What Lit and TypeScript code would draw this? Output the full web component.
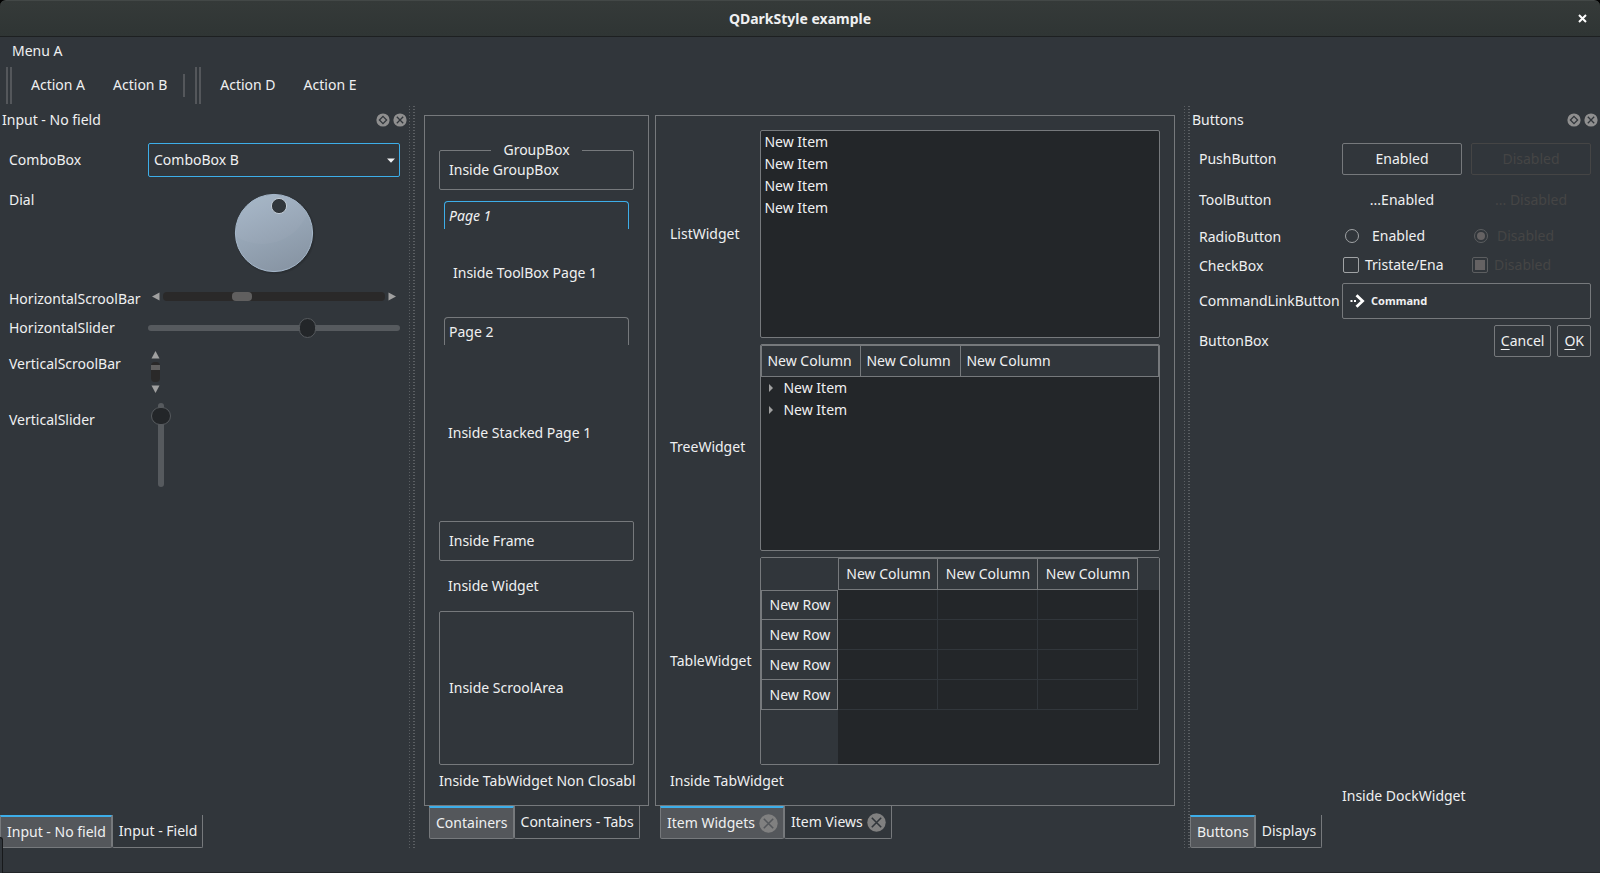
import { LitElement, html, css, svg, nothing } from "lit";
import { customElement, property } from "lit/decorators.js";
import { classMap } from "lit/directives/class-map.js";

const base = css`
  * { box-sizing: border-box; }
  button, select, input { font: inherit; color: inherit; margin: 0; }
  button { background: none; border: 0; padding: 0; text-align: center; white-space: nowrap; }
  svg { display: block; flex: none; }
`;

interface Tab { label: string; closable?: boolean; }

const crossGlyph = svg`<path d="M3.8 3.8l6.4 6.4M10.2 3.8l-6.4 6.4" stroke="#31363b" stroke-width="1.3"/>`;
const diamondGlyph = svg`<path d="M7 3.4L10.6 7L7 10.6L3.4 7z" fill="none" stroke="#31363b" stroke-width="1.3"/>`;

@customElement("tab-strip")
class TabStrip extends LitElement {
  @property({ attribute: false }) tabs: Tab[] = [];
  @property({ type: Number }) selected = 0;

  static styles = [base, css`
    :host { display: block; }
    .strip { display: flex; height: 33px; }
    .tab {
      display: flex; align-items: center; gap: 4px; padding: 0 5px 0 6px;
      border: 1px solid #76797c; border-top: 0 solid #3daee9; border-radius: 0 0 2px 2px;
      line-height: 20px; white-space: nowrap;
    }
    .selected { background: #54575b; border-top-width: 2px; }
    .selected .cross { stroke: #54575b; }
    .cross { stroke: #31363b; }
  `];

  render() {
    return html`<div class="strip" role="tablist">${this.tabs.map((t, i) => html`
      <button class=${classMap({ tab: true, selected: i === this.selected })} role="tab"
        aria-selected=${i === this.selected} @click=${() => (this.selected = i)}>
        ${t.label}${t.closable ? html`
          <svg width="19" height="19" viewBox="0 0 19 19">
            <circle cx="9.5" cy="9.5" r="9.2" fill="#808080"/>
            <path class="cross" d="M4.8 4.8l9.4 9.4M14.2 4.8l-9.4 9.4" stroke-width="1.6"/>
          </svg>` : nothing}
      </button>`)}</div>`;
  }
}

@customElement("dock-panel")
class DockPanel extends LitElement {
  @property() heading = "";
  @property({ attribute: false }) tabs: Tab[] = [];

  static styles = [base, css`
    :host { display: flex; flex-direction: column; min-width: 0; }
    .head { display: flex; align-items: center; gap: 3px; height: 28px; padding: 0 2px; flex: none; }
    .title { flex: 1; font-weight: 400; font-size: 14px; line-height: 20px; margin: 0; }
    .body { flex: 1; min-height: 0; padding: 9px; display: grid; }
  `];

  render() {
    return html`
      <div class="head">
        <h2 class="title">${this.heading}</h2>
        <button aria-label="Float"><svg width="14" height="14" viewBox="0 0 14 14"><circle cx="7" cy="7" r="6.6" fill="#8f8f8f"/>${diamondGlyph}</svg></button>
        <button aria-label="Close"><svg width="14" height="14" viewBox="0 0 14 14"><circle cx="7" cy="7" r="6.6" fill="#8f8f8f"/>${crossGlyph}</svg></button>
      </div>
      <div class="body"><slot></slot></div>
      <tab-strip .tabs=${this.tabs}></tab-strip>`;
  }
}

@customElement("input-form")
class InputForm extends LitElement {
  static styles = [base, css`
    :host { display: block; min-width: 0; }
    .form {
      display: grid; grid-template-columns: 130px minmax(0, 1fr); column-gap: 9px; row-gap: 6px;
      grid-template-rows: 34px 100px 20px 26px 50px 84px; line-height: 20px;
    }
    .label { display: flex; align-items: center; max-height: 34px; }
    .combo { position: relative; display: flex; }
    .select {
      flex: 1; min-width: 0; appearance: none; background: #31363b; border: 1px solid #3daee9; border-radius: 2px;
      padding: 0 20px 0 5px; outline: 0;
    }
    .caret { position: absolute; right: 5px; top: 15px; pointer-events: none; }
    .dial { position: relative; display: grid; place-items: center; }
    .dialinput { position: absolute; inset: 0; width: 100%; height: 100%; opacity: 0; }
    .range { appearance: none; background: none; display: block; min-width: 0; }
    .hbar { display: flex; gap: 3px; padding: 3px 4px 8px 4px; }
    .hbar .range { flex: 1; height: 9px; border-radius: 4px; background: #2a2929; }
    .hbar .range::-webkit-slider-thumb { appearance: none; width: 20px; height: 9px; border-radius: 4px; background: #605f5f; }
    .hslider { width: 100%; height: 26px; }
    .hslider::-webkit-slider-runnable-track { height: 6px; border-radius: 3px; background: #565a5e; }
    .hslider::-webkit-slider-thumb {
      appearance: none; width: 17px; height: 20px; margin-top: -7px; border-radius: 9px;
      background: #232629; border: 1px solid #565a5e;
    }
    .vbar { display: flex; flex-direction: column; align-items: center; gap: 3px; width: 14px; padding: 4px 0; }
    .vbar .range { writing-mode: vertical-lr; width: 9px; height: 20px; border-radius: 4px; background: #2a2929; }
    .vbar .range::-webkit-slider-thumb { appearance: none; width: 9px; height: 5px; background: #605f5f; }
    .vslider { writing-mode: vertical-lr; width: 26px; height: 84px; }
    .vslider::-webkit-slider-runnable-track { width: 6px; border-radius: 3px; background: #565a5e; }
    .vslider::-webkit-slider-thumb {
      appearance: none; width: 20px; height: 18px; margin-left: -7px; border-radius: 9px;
      background: #232629; border: 1px solid #565a5e;
    }
  `];

  render() {
    return html`<div class="form">
      <label class="label" for="combo">ComboBox</label>
      <div class="combo">
        <select class="select" id="combo"><option>ComboBox A</option><option selected>ComboBox B</option></select>
        <svg class="caret" width="8" height="5" viewBox="0 0 8 5"><path d="M0 .5h8L4 4.7z" fill="#eff0f1"/></svg>
      </div>

      <label class="label" for="dial">Dial</label>
      <div class="dial">
        <svg width="84" height="84" viewBox="0 0 84 84">
          <defs>
            <linearGradient id="face" x1=".3" y1="0" x2=".7" y2="1"><stop offset="0" stop-color="#a3b4c5"/><stop offset="1" stop-color="#8794a3"/></linearGradient>
            <radialGradient id="shade"><stop offset=".88" stop-color="#1c1f22" stop-opacity=".7"/><stop offset="1" stop-color="#1c1f22" stop-opacity="0"/></radialGradient>
            <clipPath id="rim"><circle cx="42" cy="42" r="38"/></clipPath>
          </defs>
          <circle cx="43" cy="43" r="41" fill="url(#shade)"/>
          <circle cx="42" cy="42" r="38.6" fill="url(#face)" stroke="#a6b8cb"/>
          <circle cx="30" cy="4" r="49" fill="#fff" opacity=".03" clip-path="url(#rim)"/>
          <circle cx="47" cy="15" r="7.6" fill="#31363b" stroke="#c2ccd6"/>
        </svg>
        <input class="dialinput" id="dial" type="range" value="52">
      </div>

      <label class="label" for="hbar">HorizontalScroolBar</label>
      <div class="hbar">
        <button aria-label="Scroll left"><svg width="8" height="9" viewBox="0 0 8 9"><path d="M7.5 .5v8L0 4.5z" fill="#a0a0a0"/></svg></button>
        <input class="range" id="hbar" type="range" value="34">
        <button aria-label="Scroll right"><svg width="8" height="9" viewBox="0 0 8 9"><path d="M.5 .5v8L8 4.5z" fill="#a0a0a0"/></svg></button>
      </div>

      <label class="label" for="hslider">HorizontalSlider</label>
      <input class="range hslider" id="hslider" type="range" max="1000" value="643">

      <label class="label" for="vbar">VerticalScroolBar</label>
      <div class="vbar">
        <button aria-label="Scroll up"><svg width="9" height="8" viewBox="0 0 9 8"><path d="M.5 7.5h8L4.5 0z" fill="#a0a0a0"/></svg></button>
        <input class="range" id="vbar" type="range" value="20">
        <button aria-label="Scroll down"><svg width="9" height="8" viewBox="0 0 9 8"><path d="M.5 .5h8L4.5 8z" fill="#a0a0a0"/></svg></button>
      </div>

      <label class="label" for="vslider">VerticalSlider</label>
      <input class="range vslider" id="vslider" type="range" value="6">
    </div>`;
  }
}

@customElement("button-form")
class ButtonForm extends LitElement {
  static styles = [base, css`
    :host { display: grid; min-width: 0; }
    .form {
      display: grid; grid-template-columns: 134px minmax(0, 1fr) minmax(0, 1fr); column-gap: 9px; row-gap: 6px;
      grid-template-rows: 32px 38px 23px 23px 36px 32px 1fr; line-height: 20px;
    }
    .label { display: flex; align-items: center; white-space: nowrap; }
    .push { border: 1px solid #76797c; border-radius: 2px; }
    .push:disabled { border-color: #454545; }
    button:disabled, .off { color: #454545; }
    .option { display: flex; align-items: center; white-space: nowrap; height: 22px; }
    .radio, .check { appearance: none; flex: none; border: 1px solid #a0a3a5; display: grid; place-items: center; }
    .radio { width: 14px; height: 14px; border-radius: 7px; margin: 0 13px 0 3px; }
    .check { width: 16px; height: 16px; border-radius: 2px; margin: 0 6px 0 1px; }
    .radio:disabled, .check:disabled { border-color: #5c5e60; }
    .radio:checked::before { content: ""; width: 8px; height: 8px; border-radius: 4px; background: #656263; }
    .check:checked::before { content: ""; width: 10px; height: 10px; background: #656263; }
    .off .radio { margin-right: 9px; }
    .wide { grid-column: 2 / -1; }
    .command { display: flex; align-items: center; gap: 6px; padding: 0 7px; font-size: 11px; font-weight: 700; }
    .box { display: flex; justify-content: flex-end; gap: 6px; }
    .box .push { padding: 0 6px; }
    .key { text-decoration: underline; text-underline-offset: 3px; text-decoration-thickness: 1px; }
    .foot { align-self: end; }
  `];

  render() {
    return html`<div class="form">
      <span class="label">PushButton</span>
      <button class="push">Enabled</button>
      <button class="push" disabled>Disabled</button>

      <span class="label">ToolButton</span>
      <button>...Enabled</button>
      <button disabled>... Disabled</button>

      <span class="label">RadioButton</span>
      <label class="option"><input class="radio" type="radio" name="r1">Enabled</label>
      <label class="option off"><input class="radio" type="radio" name="r2" checked disabled>Disabled</label>

      <span class="label">CheckBox</span>
      <label class="option"><input class="check" type="checkbox">Tristate/Ena</label>
      <label class="option off"><input class="check" type="checkbox" checked disabled>Disabled</label>

      <span class="label">CommandLinkButton</span>
      <button class="push wide command">
        <svg width="15" height="16" viewBox="0 0 15 16"><path d="M.5 7h2v2h-2zM4 7h2v2h-2z" fill="#fff"/><path d="M6.5 2.2L12.6 8L6.5 13.8" fill="none" stroke="#fff" stroke-width="2.8"/></svg>
        Command
      </button>

      <span class="label">ButtonBox</span>
      <div class="wide box">
        <button class="push"><span class="key">C</span>ancel</button>
        <button class="push"><span class="key">O</span>K</button>
      </div>
      <span class="wide foot">Inside DockWidget</span>
    </div>`;
  }
}

@customElement("container-pane")
class ContainerPane extends LitElement {
  static styles = [base, css`
    :host {
      flex: 1; min-height: 0; display: flex; flex-direction: column; gap: 6px; line-height: 20px;
      border: 1px solid #76797c; padding: 24px 14px 14px;
    }
    .group, .frame { border: 1px solid #76797c; border-radius: 2px; margin: 0; }
    .group { padding: 0 9px 9px; min-width: 0; }
    .legend { margin: 0 auto; padding: 0 12px; }
    .toolbox { padding: 5px 5px 0; }
    .page {
      display: block; width: 100%; height: 28px; padding: 0 4px; text-align: left; line-height: 26px;
      border: 1px solid #76797c; border-bottom: 0; border-radius: 4px 4px 0 0;
    }
    .open { border-color: #3daee9; font-style: italic; }
    .sheet { display: flex; align-items: center; height: 88px; padding: 0 9px; }
    .cell { display: flex; align-items: center; padding: 0 9px; }
    .stack { flex: 1 1 164px; }
    .frame { min-height: 40px; }
    .plain { height: 38px; }
    .area { flex: 1 1 154px; }
    .foot { white-space: nowrap; }
  `];

  render() {
    return html`
      <fieldset class="group"><legend class="legend">GroupBox</legend>Inside GroupBox</fieldset>
      <div class="toolbox">
        <button class="page open">Page 1</button>
        <div class="sheet">Inside ToolBox Page 1</div>
        <button class="page">Page 2</button>
      </div>
      <div class="cell stack">Inside Stacked Page 1</div>
      <div class="cell frame">Inside Frame</div>
      <div class="cell plain">Inside Widget</div>
      <div class="cell frame area">Inside ScroolArea</div>
      <div class="foot">Inside TabWidget Non Closabl</div>`;
  }
}

const columns = ["New Column", "New Column", "New Column"];

@customElement("item-pane")
class ItemPane extends LitElement {
  static styles = [base, css`
    :host {
      flex: 1; min-height: 0; display: grid; grid-template-columns: auto minmax(0, 1fr);
      grid-template-rows: repeat(3, minmax(0, 1fr)) 20px; column-gap: 9px; row-gap: 6px; align-items: center;
      line-height: 20px; border: 1px solid #76797c; padding: 14px;
    }
    .view { align-self: stretch; background: #232629; border: 1px solid #76797c; border-radius: 2px; overflow: hidden; min-height: 0; }
    .list { list-style: none; margin: 0; padding: 0 3px; }
    .item { height: 22px; line-height: 22px; }
    .table { border-collapse: separate; border-spacing: 0; table-layout: fixed; width: 100%; }
    th { font-weight: 400; padding: 0; background: #31363b; white-space: nowrap; }
    td { padding: 0; }
    .c100 { width: 100px; }
    .c77 { width: 77px; }
    .tree th { height: 32px; text-align: left; padding-left: 5px; border: 1px solid #76797c; border-left-width: 0; }
    .tree th:first-child { border-left-width: 1px; }
    .tree td { height: 22px; line-height: 22px; }
    .node { display: flex; align-items: center; gap: 10px; padding-left: 8px; }
    .grid { height: 100%; }
    .grid .col { height: 32px; border: 1px solid #76797c; border-left-width: 0; }
    .grid .first { border-left-width: 1px; }
    .grid .row { height: 30px; border: 1px solid #76797c; border-top-width: 0; }
    .grid .toprow { border-top-width: 1px; }
    .grid .data { border: 1px solid #31363b; border-width: 0 1px 1px 0; }
    .foot { grid-column: 1 / -1; }
  `];

  render() {
    return html`
      <span>ListWidget</span>
      <div class="view"><ul class="list">${[1, 2, 3, 4].map(() => html`<li class="item">New Item</li>`)}</ul></div>

      <span>TreeWidget</span>
      <div class="view">
        <table class="table tree">
          <colgroup><col class="c100"><col class="c100"><col></colgroup>
          <thead><tr>${columns.map((c) => html`<th>${c}</th>`)}</tr></thead>
          <tbody>${[1, 2].map(() => html`<tr><td colspan="3"><div class="node">
            <svg width="4" height="8" viewBox="0 0 4 8"><path d="M0 0v8L4 4z" fill="#a0a0a0"/></svg>New Item</div></td></tr>`)}</tbody>
        </table>
      </div>

      <span>TableWidget</span>
      <div class="view">
        <table class="table grid">
          <colgroup><col class="c77"><col class="c100"><col class="c100"><col class="c100"><col></colgroup>
          <thead><tr><th></th>${columns.map((c, i) => html`<th class=${classMap({ col: true, first: i === 0 })}>${c}</th>`)}<th></th></tr></thead>
          <tbody>
            ${[0, 1, 2, 3].map((r) => html`<tr>
              <th class=${classMap({ row: true, toprow: r === 0 })}>New Row</th>
              ${columns.map(() => html`<td class="data"></td>`)}<td></td></tr>`)}
            <tr><th></th><td colspan="4"></td></tr>
          </tbody>
        </table>
      </div>
      <span class="foot">Inside TabWidget</span>`;
  }
}

@customElement("app-root")
class AppRoot extends LitElement {
  static styles = [base, css`
    :host {
      position: relative; display: flex; flex-direction: column; height: 100vh; overflow: hidden;
      background: #31363b; color: #eff0f1; font: 14px/20px "Noto Sans", sans-serif;
    }
    .titlebox { background: #000; flex: none; }
    .titlebar {
      display: grid; grid-template-columns: 1fr auto 1fr; align-items: center; height: 37px; padding: 0 13px;
      background: linear-gradient(#353a39, #2f3534); border-top: 1px solid #434847; border-bottom: 1px solid #1d2021;
      border-radius: 6px 6px 0 0;
    }
    .title { grid-column: 2; font-size: 14px; line-height: 18px; font-weight: 700; margin: 0; }
    .close { justify-self: end; }
    .menubar { display: flex; height: 27px; flex: none; padding: 0 12px; align-items: center; }
    .toolbars { display: flex; height: 42px; flex: none; align-items: center; padding: 0 6px; }
    .grip { width: 6px; height: 37px; border: 2px solid #54575b; border-width: 0 2px; margin-right: 5px; }
    .rule { width: 2px; height: 23px; background: #54575b; margin: 0 10px 0 2px; }
    .action { padding: 0 14px; height: 32px; }
    .main { flex: 1; min-height: 0; display: flex; }
    .left { flex: 0 1 409px; }
    .right { flex: 0 1 410px; }
    .splitter {
      flex: none; width: 6px;
      background:
        repeating-linear-gradient(#5b5f63 0 1px, transparent 1px 3px) left / 1px 100% no-repeat,
        repeating-linear-gradient(#5b5f63 0 1px, transparent 1px 3px) right / 2px 100% no-repeat;
    }
    .center { flex: 1; min-width: 0; display: flex; gap: 6px; padding: 9px; }
    .widget { display: flex; flex-direction: column; min-width: 0; }
    .narrow { flex: 0 1 225px; }
    .grow { flex: 1; }
    .tabs { padding-left: 5px; }
    .status { height: 25px; flex: none; border-bottom: 1px solid #232629; }
    .behind {
      position: absolute; left: 0; bottom: 0; width: 3px; height: 36px; background: #31363b;
      border: 1px solid #17191b; border-left: 0; border-bottom: 0; border-top-right-radius: 3px;
    }
  `];

  render() {
    return html`
      <div class="titlebox"><header class="titlebar">
        <h1 class="title">QDarkStyle example</h1>
        <button class="close" aria-label="Close window"><svg width="9" height="9" viewBox="0 0 9 9"><path d="M1 1l7 7M8 1L1 8" stroke="#fff" stroke-width="2"/></svg></button>
      </header></div>
      <nav class="menubar"><button>Menu A</button></nav>
      <div class="toolbars">
        <span class="grip"></span>
        <button class="action">Action A</button><button class="action">Action B</button>
        <span class="rule"></span><span class="grip"></span>
        <button class="action">Action D</button><button class="action">Action E</button>
      </div>
      <main class="main">
        <dock-panel class="left" heading="Input - No field" .tabs=${[{ label: "Input - No field" }, { label: "Input - Field" }]}>
          <input-form></input-form>
        </dock-panel>
        <div class="splitter"></div>
        <div class="center">
          <section class="widget narrow">
            <container-pane></container-pane>
            <tab-strip class="tabs" .tabs=${[{ label: "Containers" }, { label: "Containers - Tabs" }]}></tab-strip>
          </section>
          <section class="widget grow">
            <item-pane></item-pane>
            <tab-strip class="tabs" .tabs=${[{ label: "Item Widgets", closable: true }, { label: "Item Views", closable: true }]}></tab-strip>
          </section>
        </div>
        <div class="splitter"></div>
        <dock-panel class="right" heading="Buttons" .tabs=${[{ label: "Buttons" }, { label: "Displays" }]}>
          <button-form></button-form>
        </dock-panel>
      </main>
      <div class="status"></div>
      <div class="behind"></div>`;
  }
}
